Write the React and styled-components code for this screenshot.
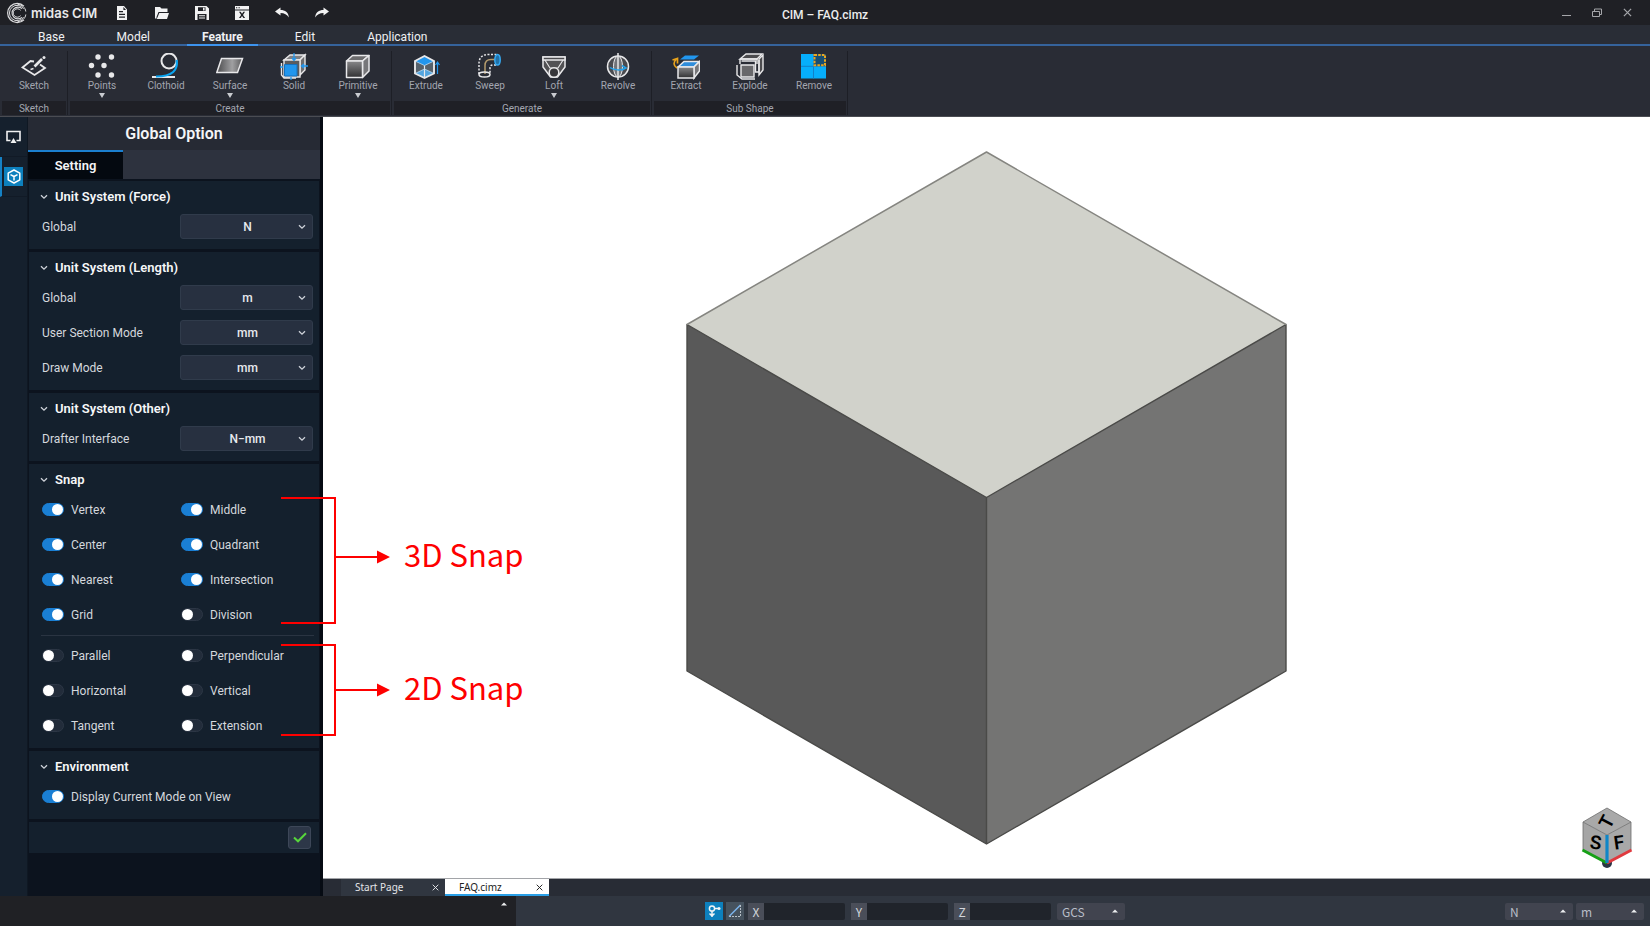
import React, { useState } from "react";
import styled, { createGlobalStyle, css } from "styled-components";

const ui = `Roboto, "Noto Sans CJK KR", sans-serif`;
const cjk = `"Noto Sans CJK KR", "Noto Sans", sans-serif`;

const GlobalStyle = createGlobalStyle`
  * { box-sizing: border-box; }
  html, body, #root { height: 100%; margin: 0; }
  body { background: #1f2025; color: #e6e8ec; font: 12px/16px ${ui}; }
  button, input, select { font: inherit; color: inherit; margin: 0; padding: 0; border: 0; border-radius: 0; background: none; }
  button { cursor: pointer; }
  svg { display: block; flex: none; }
`;

const Shell = styled.div`
  min-height: 100vh;
  display: flex;
  flex-direction: column;
`;

/* ---------- title bar ---------- */
const TitleBar = styled.header`
  height: 25px;
  display: grid;
  grid-template-columns: 1fr auto 1fr;
  align-items: center;
  background: #1f2025;
`;
const TitleLeft = styled.div`
  display: flex;
  align-items: center;
  padding-left: 6px;
`;
const Brand = styled.div`
  display: flex;
  align-items: center;
  gap: 4px;
  width: 96px;
  font: 600 13px/20px Inter, sans-serif;
  color: #e9e9ea;
  white-space: nowrap;
`;
const QuickButton = styled.button`
  width: 40px;
  height: 24px;
  display: grid;
  place-items: center;
`;
const DocTitle = styled.h1`
  margin: 0;
  padding-top: 4px;
  font: 500 12px/20px ${ui};
  color: #eceded;
`;
const WindowButtons = styled.div`
  display: flex;
  justify-content: flex-end;
  padding-right: 7px;
  color: #a5a6aa;
`;
const WindowButton = styled.button`
  width: 31px;
  height: 24px;
  display: grid;
  place-items: center;
`;

/* ---------- menu ---------- */
const Menu = styled.nav`
  height: 21px;
  display: flex;
  gap: 22px;
  padding-left: 23px;
  background: #292d36;
  border-bottom: 2px solid #35639c;
`;
const MenuItem = styled.a`
  height: 21px;
  padding: 2px 15px 0;
  text-decoration: none;
  color: #f0f1f3;
  font: ${(p) => (p.$active ? 700 : 400)} 12px/20px ${ui};
  border-bottom: 2px solid ${(p) => (p.$active ? "#3d94ef" : "transparent")};
`;

/* ---------- ribbon ---------- */
const Ribbon = styled.div`
  height: 71px;
  display: flex;
  padding: 5px 0 1px;
  background: #292c35;
  border-bottom: 1px solid #4a4c52;
`;
const Group = styled.section`
  display: flex;
  flex-direction: column;
  padding: 0 1px 0 2px;
  border-right: 1px solid #1d1f26;
`;
const Tools = styled.div`
  flex: 1;
  display: flex;
`;
const Tool = styled.button`
  width: 64px;
  display: flex;
  flex-direction: column;
  align-items: center;
  padding-top: 2px;
  color: #a3a6b0;
  font: 10px/11px ${ui};
`;
const Drop = styled.span`
  border: 3px solid transparent;
  border-top: 5px solid #c9cbd0;
  border-bottom: 0;
  margin-top: 2px;
`;
const GroupName = styled.h2`
  margin: 0;
  height: 14px;
  background: #1f2026;
  color: #a3a6b0;
  text-align: center;
  font: 10px/16px ${ui};
`;

/* ---------- workspace ---------- */
const Workspace = styled.div`
  flex: 1;
  display: flex;
`;
const Rail = styled.nav`
  width: 28px;
  background: #15202d;
  border-right: 1px solid #0f1823;
`;
const RailButton = styled.button`
  width: 27px;
  height: 40px;
  display: grid;
  place-items: center;
  padding-right: 2px;
  border-left: 2px solid ${(p) => (p.$active ? "#1581c4" : "transparent")};
  border-bottom: 1px solid #111a26;
`;
const RailTile = styled.span`
  width: 19px;
  height: 19px;
  display: grid;
  place-items: center;
  background: ${(p) => (p.$active ? "#0d80bd" : "none")};
`;
const Panel = styled.aside`
  width: 295px;
  background: #0c131e;
  border-right: 3px solid #060b13;
  position: relative;
  z-index: 1;
`;
const PanelTitle = styled.h2`
  margin: 0;
  height: 33px;
  background: #262a34;
  color: #f4f5f7;
  text-align: center;
  font: 600 16px/34px ${ui};
`;
const PanelTabs = styled.div`
  height: 29px;
  display: flex;
  background: #2d323e;
`;
const PanelTab = styled.button`
  width: 95px;
  background: #040910;
  border-top: 2px solid #1b7fcf;
  color: #f4f5f7;
  font: 600 13px/20px ${ui};
`;
const Sections = styled.div`
  display: flex;
  flex-direction: column;
  gap: 3px;
  padding: 2px 1px 0 1px;
`;
const Section = styled.section`
  padding-bottom: 5px;
  background: #14202d;
`;
const SectionTitle = styled.h3`
  margin: 0;
  height: 28px;
  display: flex;
  align-items: center;
  gap: 7px;
  padding: 3px 0 0 11px;
  color: #f6f7f9;
  font: 600 13px/20px ${ui};
`;
const Field = styled.label`
  height: 35px;
  display: flex;
  align-items: center;
  justify-content: space-between;
  padding: 0 6px 0 13px;
  color: #d5d8dd;
`;
const SelectBox = styled.span`
  position: relative;
  width: ${(p) => p.$width};
  height: ${(p) => p.$height};
  display: flex;
  align-items: center;
  svg {
    position: absolute;
    right: 7px;
    pointer-events: none;
  }
`;
const Picker = styled.select`
  appearance: none;
  width: 100%;
  height: 100%;
  ${(p) =>
    p.$status
      ? css`
          padding-left: 5px;
          border-radius: 2px;
          background: #41444f;
          color: #b9bec8;
          font: 12px/17px ${cjk};
        `
      : css`
          padding-left: 2px;
          text-align-last: center;
          border: 1px solid #303b4b;
          border-radius: 3px;
          background: #273040;
          color: #e8eaee;
          font-weight: 500;
        `}
`;
const SnapGrid = styled.div`
  position: relative;
  display: grid;
  grid-template-columns: 139px 1fr;
  grid-auto-rows: 35px;
  padding-left: 13px;
`;
const Rule = styled.hr`
  margin: 3px 5px 2px 12px;
  border: 0;
  height: 1px;
  background: #2a3442;
`;
const ToggleLabel = styled.label`
  height: 35px;
  display: flex;
  align-items: center;
  gap: 7px;
  color: #d5d8dd;
  white-space: nowrap;
`;
const Switch = styled.input`
  appearance: none;
  width: 22px;
  height: 13px;
  display: flex;
  align-items: center;
  border-radius: 7px;
  border: 1px solid #2c3645;
  background: #222c3a;
  &::before {
    content: "";
    width: 11px;
    height: 11px;
    border-radius: 50%;
    background: #fff;
  }
  &:checked {
    justify-content: flex-end;
    border-color: #1a7fd4;
    background: #1a7fd4;
  }
`;
const SoloRow = styled.div`
  padding-left: 13px;
`;
const PanelFooter = styled.div`
  height: 31px;
  display: flex;
  align-items: center;
  justify-content: flex-end;
  padding-right: 8px;
  background: #14202d;
`;
const Apply = styled.button`
  width: 23px;
  height: 23px;
  display: grid;
  place-items: center;
  border: 1px solid #3d4758;
  border-radius: 3px;
  background: #2d3748;
`;

/* ---------- red call-outs over the snap list ---------- */
const Callout = styled.div`
  position: absolute;
  left: 252px;
  top: ${(p) => p.$top}px;
  bottom: ${(p) => p.$bottom}px;
  display: flex;
  color: #fe0000;
  font: 31px/40px ${cjk};
  white-space: nowrap;
  pointer-events: none;
`;
const Bracket = styled.span`
  width: 55px;
  border: 2px solid #fe0000;
  border-left: 0;
`;
const Pointer = styled.span`
  height: ${(p) => p.$height}px;
  display: flex;
  align-items: center;
`;
const CalloutText = styled.span`
  padding: 0 0 6px 14px;
`;

/* ---------- viewport ---------- */
const Main = styled.main`
  flex: 1;
  display: flex;
  flex-direction: column;
`;
const Viewport = styled.div`
  flex: 1;
  position: relative;
  display: grid;
  place-items: center;
  background: #fff;
`;
const Navigator = styled.div`
  position: absolute;
  right: 17px;
  bottom: 8px;
`;
const DocTabs = styled.div`
  height: 18px;
  display: flex;
  padding-left: 18px;
  background: #282c35;
  border-top: 1px solid #a2a4a8;
`;
const DocTab = styled.div`
  width: 104px;
  display: flex;
  align-items: center;
  justify-content: space-between;
  padding: 0 4px 0 14px;
  background: ${(p) => (p.$active ? "#fff" : "#303640")};
  color: ${(p) => (p.$active ? "#222" : "#e4e5e8")};
  box-shadow: ${(p) => (p.$active ? "inset 0 -2px #2a9fe6" : "none")};
  font: 10px/15px "Noto Sans", sans-serif;
`;
const CloseTab = styled.button`
  width: 11px;
  height: 14px;
  display: grid;
  place-items: center;
`;

/* ---------- status bar ---------- */
const StatusBar = styled.footer`
  height: 30px;
  display: flex;
  background: #303640;
`;
const Log = styled.div`
  width: 516px;
  display: flex;
  justify-content: flex-end;
  padding: 6px 9px;
  background: #202125;
`;
const Coordinates = styled.form`
  display: flex;
  align-items: center;
  gap: 6px;
  padding-left: 189px;
`;
const ModeButtons = styled.div`
  display: flex;
  gap: 3px;
  margin-right: -2px;
`;
const ModeButton = styled.button`
  width: 18px;
  height: 18px;
  display: grid;
  place-items: center;
  background: ${(p) => (p.$active ? "#0d80bd" : "#46525e")};
`;
const Axis = styled.label`
  display: flex;
  color: #d3d6dc;
  font: 12px/17px ${cjk};
`;
const AxisName = styled.span`
  width: 16px;
  background: #4a4e59;
  text-align: center;
`;
const AxisInput = styled.input`
  width: 81px;
  height: 17px;
  background: #20242b;
  border-radius: 0 2px 2px 0;
`;
const Units = styled.div`
  margin-left: auto;
  display: flex;
  align-items: center;
  gap: 3px;
  padding-right: 6px;
`;

/* ---------- drawings ---------- */
const Chevron = () => (
  <svg width="8" height="6" viewBox="0 0 8 6" fill="none" stroke="#cfd3da" strokeWidth="1.3">
    <path d="M1 1.2 4 4.2 7 1.2" />
  </svg>
);
const UpMark = () => (
  <svg width="6" height="4" viewBox="0 0 6 4">
    <path d="M0 3.5 3 .5 6 3.5z" fill="#eceef0" />
  </svg>
);
const Cross = ({ size = 8 }) => (
  <svg width={size} height={size} viewBox="0 0 8 8" stroke="currentColor" strokeWidth="1.1">
    <path d="M.8.8 7.2 7.2M7.2.8.8 7.2" />
  </svg>
);
const Logo = () => (
  <svg width="21" height="22" viewBox="0 0 21 22" fill="none" stroke="#dcdcde">
    <path d="M18 4.200A9.600 9.600 0 1 0 18 17.800" strokeWidth="1.200" />
    <path d="M17.600 6.800A7.700 7.700 0 1 0 17.600 15.200" strokeWidth="1" />
    <path d="M16 6.700A5.900 5.900 0 1 0 16 15.300" strokeWidth="1.100" />
    <path d="M14.600 8.300A4.200 4.200 0 1 0 14.600 13.700" strokeWidth="1" />
    <path d="M11.500 2.300C16 2.600 19.300 5.500 19.800 9.500M11.500 19.700C16 19.400 19.300 16.500 19.800 12.500" strokeWidth="1" />
  </svg>
);

const quick = [
  ["New", <path key="a" fillRule="evenodd" d="M2 0h7l3 3.500V14H2zM4 5h4v1.200H4zM4 7.800h6V9H4zM4 10.500h6v1.200H4zM8.400 1v3h2.700z" />],
  ["Open", <path key="a" fillRule="evenodd" d="M0 1h5l1.500 1.500H12.500V6H3.500L1.500 11V2.500H1.500V12.500H0zM4.300 7H14l-2 6H1.800z" />],
  ["Save", <path key="a" fillRule="evenodd" d="M0 0h11.500L14 2.500V14H0zM3 1.200V5h7.500V1.200zM8 1.800h1.600v2.600H8zM2.500 8v6h9V8zM4 9.300h6v1H4zM4 11.500h6v1H4z" />],
  ["Close project", <path key="a" fillRule="evenodd" d="M0 0h14v14H0zM1 1.200v1h1.300v-1zM3.500 1.200v1h1.300v-1zM0 3.600h14v.9H0zM4 5.800l2.100 3.100L4 12h1.700L7 10l1.400 2h1.700L8 8.900l2-3.100H8.400L7 7.700 5.700 5.800z" />],
  ["Undo", <path key="a" d="M0 5.500 5.500 1.500v2.600c4.500 0 8 2.200 8.300 7.400C12 8.600 9.500 7 5.500 7v2.600z" />],
  ["Redo", <path key="a" d="M14 5.500 8.500 1.500v2.600C4 4.100.5 6.300.2 11.500 2 8.600 4.500 7 8.500 7v2.600z" />],
];

const W = "#e8e8ea";
const B = "#2196ee";
const Defs = () => (
  <defs>
    <linearGradient id="steel" x1="0" x2="1"><stop offset="0" stopColor="#4a4a4c" /><stop offset=".6" stopColor="#a0a0a2" /><stop offset="1" stopColor="#5c5c5e" /></linearGradient>
    <linearGradient id="dusk" x1="0" x2="0" y1="0" y2="1"><stop offset="0" stopColor="#88888a" /><stop offset="1" stopColor="#303032" /></linearGradient>
  </defs>
);
const icons = {
  Sketch: (
    <g fill="none" stroke={W} strokeWidth="1.800">
      <path d="M14 8.500 10.500 8 2.500 14.500 14.500 22 25 15 20 11.500" />
      <path d="M22 6 14.500 13.500" strokeWidth="2.600" /><path d="M13.500 15.500 10.500 16.500" strokeWidth="1.500" /><circle cx="24" cy="4.500" r="1.500" fill={W} stroke="none" />
    </g>
  ),
  Points: (
    <g fill={W}>
      {[[10, 4], [23.5, 4], [3.5, 12.5], [16, 12.5], [10, 22], [23.5, 22]].map(([x, y]) => <circle key={x + "," + y} cx={x} cy={y} r="2.700" />)}
    </g>
  ),
  Clothoid: (
    <g fill="none" strokeWidth="2">
      <circle cx="17" cy="8" r="7.500" stroke={W} />
      <path d="M0 24h23" stroke={W} />
      <path d="M24.700 7C26 17 21 23.500 4 23.500" stroke="#0aa5f2" strokeWidth="2.200" />
    </g>
  ),
  Surface: <path d="M5.500 5.500H26.500L21.500 19.500H.8z" fill="url(#steel)" stroke={W} strokeWidth="1.500" />,
  Solid: (
    <g>
      <g stroke={W} strokeWidth="1.400"><path d="M4 7 10 2h15l-5 5z" fill="#808083" /><path d="M20 7l5-5v15l-5 5z" fill="#6c6c6e" /><path d="M4 7h16v17H4z" fill="#5c5c5e" /><path d="M1.500 10v12l2.500 3h12" fill="none" /></g>
      <path d="M4.500 11.500h12.500v11.500H4.500z" fill={B} stroke="#1670bd" />
      <path d="M14 0v7M12 5l2 2.500L16 5M28 13h-6M24 11l-2.500 2 2.500 2M0 14h3M11 27v-3" stroke={B} fill="none" strokeWidth="1.300" />
    </g>
  ),
  Primitive: (
    <g stroke={W} strokeWidth="1.500" strokeLinejoin="round">
      <path d="M2.500 8 8.500 2.500H25L18.500 8z" fill="#6c6c6e" />
      <path d="M18.500 8 25 2.500V18l-6.500 6.500z" fill="#77777a" />
      <path d="M2.500 8h16v16.500h-16z" fill="url(#dusk)" />
    </g>
  ),
  Extrude: (
    <g>
      <path d="M3 8 12.500 3 22 8v12.500L12.500 25 3 20.500z" fill="#56616b" />
      <path d="M3 8 12.500 3 22 8 12.500 12.500z" fill={B} />
      <path d="M3 20.500 12.500 16 22 20.500 12.500 25z" fill="#54a5df" />
      <path d="M12.500 12.500V25" stroke={W} strokeWidth="1.200" /><path d="M3 8 12.500 12.500 22 8M3 20.500 12.500 16 22 20.500" stroke="#b9dcf5" strokeWidth=".8" fill="none" />
      <path d="M3 8 12.500 3 22 8v12.500L12.500 25 3 20.500z" fill="none" stroke={W} strokeWidth="1.900" />
      <path d="M25.500 21V9.500M23.500 12l2-3 2 3" stroke={B} strokeWidth="1.200" fill="none" />
    </g>
  ),
  Sweep: (
    <g fill="none" strokeWidth="1.500">
      <path d="M20.500 1.500H12C6 1.500 3 5 3 10.500V21M20 12h-3c-2 0-3 1-3 3v6" stroke={W} strokeDasharray="2 1.500" />
      <path d="M20 6.500h-5c-4 0-6 2-6 6V21" stroke="#b49b6c" />
      <ellipse cx="21.500" cy="6.800" rx="2.700" ry="5.300" fill="#2272a8" stroke="#35aaf3" />
      <ellipse cx="8.500" cy="21.500" rx="5.500" ry="2.500" stroke={W} />
    </g>
  ),
  Loft: (
    <g stroke={W} strokeWidth="1.500" fill="#515154">
      <path d="M3 4h22v10L17.500 24h-7L3 14z" /><path d="M4 5.500 10 15h8L24 5.500" fill="none" strokeWidth="1.100" />
      <path d="M3 4h22v3H3z" fill="#4a4a4d" /><circle cx="14" cy="19.500" r="4.800" fill="#37373b" />
    </g>
  ),
  Revolve: (
    <g fill="none" stroke={W} strokeWidth="1.500">
      <circle cx="14" cy="13.500" r="10.500" fill="#4a4b50" /><ellipse cx="14" cy="13.500" rx="4.500" ry="10.500" strokeWidth="1" fill="#717378" /><path d="M14 0v27" />
      <path d="M6 14.500c4 3 11 3 15 1M18 12.500l4 2.500-4 2" stroke="#22a0ea" />
    </g>
  ),
  Extract: (
    <g>
      <path d="M13 2.500h14L22 6.500H8z" fill={B} />
      <path d="M6 14 12 8.500h15.500L22 14z" fill="#2f8ddb" stroke={W} strokeWidth="1.500" /><path d="M22 14l5.500-5.500V18L22 25z" fill="#77777a" stroke={W} strokeWidth="1.500" /><path d="M6 14h16v11H6z" fill="url(#dusk)" stroke={W} strokeWidth="1.500" />
      <path d="M5 15C1 12.500 1.500 9 4 6.500M.5 7l5-1.500v5" stroke="#e8a31c" strokeWidth="1.700" fill="none" />
    </g>
  ),
  Explode: (
    <g stroke={W} strokeWidth="1.400" fill="#4b4b4e">
      <path d="M4 6 10 1h16l-5 5z" /><path d="M23 6l4-4v15l-4 5z" /><path d="M4 6h17v5M4 6v5M1 12v10l5 4h13" fill="none" /><path d="M5.500 8h14v11H23V7" fill="none" /><path d="M5 12h13v12H5z" fill="#68686b" />
    </g>
  ),
  Remove: (
    <g>
      <path d="M1 1h25v24.500H1z" fill="#06aefb" /><path d="M14 1h12v12H14z" fill="#174e73" /><path d="M13.500 1v24.500M1 13.300h25" stroke="#1280c8" /><path d="M14.500 2h10.500v10.300H14.500z" fill="none" stroke="#e9a51f" strokeWidth="2" strokeDasharray="2.500 1.200" />
    </g>
  ),
};

const Solid = () => (
  <svg width="602" height="696" viewBox="0 0 602 696" strokeLinejoin="round" role="img" aria-label="Solid cube">
    <path d="M300.500 2 600 174.500 300.500 347.500 1 174.500z" fill="#d1d2cb" />
    <path d="M1 174.500 300.500 347.500V694L1 521z" fill="#595959" />
    <path d="M300.500 347.500 600 174.500V521L300.500 694z" fill="#747473" />
    <path d="M1 521V174.500L300.500 347.500 600 174.500V521L300.500 694zM300.500 347.500V694" fill="none" stroke="#4a4a48" strokeWidth="1.400" />
    <path d="M1 174.500 300.500 2 600 174.500" fill="none" stroke="#858580" strokeWidth="1.500" />
  </svg>
);

const ViewCube = () => (
  <svg width="52" height="64" viewBox="0 0 52 64" role="img" aria-label="View direction">
    <circle cx="26" cy="57" r="5" fill="#2b3546" />
    <path d="M26 2 50 16 26 29 2 16z" fill="#a9a9a9" /><path d="M2 16 26 29V57L2 44z" fill="#a5a5a5" /><path d="M50 16 26 29V57L50 44z" fill="#a8a8a8" />
    <path d="M2 44V16L26 2 50 16V44M2 16 26 29 50 16" fill="none" stroke="#6d6d6d" strokeWidth=".8" />
    <path d="M1.500 44 26 57" stroke="#16a016" strokeWidth="3" /><path d="M50.500 44 26 57" stroke="#e03a3f" strokeWidth="3" />
    <path d="M26 29V57" stroke="#0f86c8" strokeWidth="3.200" />
    <g fontFamily="Roboto, sans-serif" fontSize="19" fontWeight="600" textAnchor="middle">
      <text transform="translate(14 43) rotate(6)">S</text>
      <text transform="translate(39 43) rotate(-8)">F</text>
      <text transform="translate(28 17) rotate(-62)" y="4">T</text>
    </g>
  </svg>
);

const groups = [
  ["Sketch", [["Sketch"]]],
  ["Create", [["Points", 1], ["Clothoid"], ["Surface", 1], ["Solid"], ["Primitive", 1]]],
  ["Generate", [["Extrude"], ["Sweep"], ["Loft", 1], ["Revolve"]]],
  ["Sub Shape", [["Extract"], ["Explode"], ["Remove"]]],
];
const unitSections = [
  ["Unit System (Force)", [["Global", "N"]]],
  ["Unit System (Length)", [["Global", "m"], ["User Section Mode", "mm"], ["Draw Mode", "mm"]]],
  ["Unit System (Other)", [["Drafter Interface", "N−mm"]]],
];
const snap3d = [["Vertex", true], ["Middle", true], ["Center", true], ["Quadrant", true], ["Nearest", true], ["Intersection", true], ["Grid", true], ["Division", false]];
const snap2d = ["Parallel", "Perpendicular", "Horizontal", "Vertical", "Tangent", "Extension"].map((n) => [n, false]);

function Toggle({ label, initial }) {
  const [on, setOn] = useState(initial);
  return (
    <ToggleLabel>
      <Switch type="checkbox" checked={on} onChange={() => setOn(!on)} />
      {label}
    </ToggleLabel>
  );
}
function SnapCallout({ top, bottom, pointer, children }) {
  return (
    <Callout $top={top} $bottom={bottom}>
      <Bracket />
      <Pointer $height={pointer}>
        <svg width="54" height="14" viewBox="0 0 54 14" fill="#fe0000">
          <path d="M0 6h41V.5L54 7 41 13.500V8H0z" />
        </svg>
        <CalloutText>{children}</CalloutText>
      </Pointer>
    </Callout>
  );
}
function StatusPicker({ label, value }) {
  return (
    <SelectBox $width="68px" $height="17px">
      <Picker $status aria-label={label}><option>{value}</option></Picker>
      <UpMark />
    </SelectBox>
  );
}

export default function App() {
  return (
    <Shell>
      <GlobalStyle />
      <TitleBar>
        <TitleLeft>
          <Brand><Logo />midas CIM</Brand>
          {quick.map(([name, shape]) => (
            <QuickButton key={name} aria-label={name} type="button">
              <svg width="14" height="14" viewBox="0 0 14 14" fill="#f2f2f3">{shape}</svg>
            </QuickButton>
          ))}
        </TitleLeft>
        <DocTitle>CIM – FAQ.cimz</DocTitle>
        <WindowButtons>
          <WindowButton aria-label="Minimize"><svg width="10" height="10" viewBox="0 0 10 10"><path d="M1 7h9v1H1z" fill="currentColor" /></svg></WindowButton>
          <WindowButton aria-label="Restore"><svg width="10" height="10" viewBox="0 0 10 10" fill="none" stroke="currentColor"><path d="M.5 3.500h7v5h-7zM2.500 3V1h7v5.500H8" /></svg></WindowButton>
          <WindowButton aria-label="Close"><Cross size={9} /></WindowButton>
        </WindowButtons>
      </TitleBar>
      <Menu>
        {["Base", "Model", "Feature", "Edit", "Application"].map((m) => (
          <MenuItem key={m} href={"#" + m.toLowerCase()} $active={m === "Feature"}>{m}</MenuItem>
        ))}
      </Menu>
      <Ribbon>
        <svg width="0" height="0"><Defs /></svg>
        {groups.map(([name, tools]) => (
          <Group key={name}>
            <Tools>
              {tools.map(([tool, drop]) => (
                <Tool key={tool} type="button">
                  <svg width="28" height="27" viewBox="0 0 28 27">{icons[tool]}</svg>
                  {tool}
                  {drop && <Drop />}
                </Tool>
              ))}
            </Tools>
            <GroupName>{name}</GroupName>
          </Group>
        ))}
      </Ribbon>
      <Workspace>
        <Rail>
          <RailButton aria-label="Display">
            <RailTile>
              <svg width="15" height="14" viewBox="0 0 15 14" fill="none" stroke="#f0f1f2" strokeWidth="1.600"><path d="M4.500 10.500H1V1.500h13v9h-3.500" /><path d="M7.500 8 10.500 13h-6z" fill="#f0f1f2" stroke="none" /></svg>
            </RailTile>
          </RailButton>
          <RailButton aria-label="Model" $active>
            <RailTile $active>
              <svg width="14" height="15" viewBox="0 0 14 15" fill="none" stroke="#fff" strokeWidth="1.500" strokeLinejoin="round"><path d="M7 1 12.800 4.200v6.600L7 14 1.200 10.800V4.200zM3.500 5.700 7 7.500l3.500-1.800M7 7.500v4" /></svg>
            </RailTile>
          </RailButton>
        </Rail>
        <Panel>
          <PanelTitle>Global Option</PanelTitle>
          <PanelTabs><PanelTab type="button">Setting</PanelTab></PanelTabs>
          <Sections>
            {unitSections.map(([title, fields]) => (
              <Section key={title}>
                <SectionTitle><Chevron />{title}</SectionTitle>
                {fields.map(([label, value]) => (
                  <Field key={label}>
                    {label}
                    <SelectBox $width="133px" $height="25px">
                      <Picker><option>{value}</option></Picker>
                      <Chevron />
                    </SelectBox>
                  </Field>
                ))}
              </Section>
            ))}
            <Section>
              <SectionTitle><Chevron />Snap</SectionTitle>
              <SnapGrid>
                {snap3d.map(([n, on]) => <Toggle key={n} label={n} initial={on} />)}
                <SnapCallout top={5} bottom={8} pointer={120}>3D Snap</SnapCallout>
              </SnapGrid>
              <Rule />
              <SnapGrid>
                {snap2d.map(([n, on]) => <Toggle key={n} label={n} initial={on} />)}
                <SnapCallout top={6} bottom={7} pointer={92}>2D Snap</SnapCallout>
              </SnapGrid>
            </Section>
            <Section>
              <SectionTitle><Chevron />Environment</SectionTitle>
              <SoloRow><Toggle label="Display Current Mode on View" initial={true} /></SoloRow>
            </Section>
            <PanelFooter>
              <Apply aria-label="Apply">
                <svg width="14" height="11" viewBox="0 0 14 11" fill="none" stroke="#57d63c" strokeWidth="2"><path d="M1 5.500 5 9.300 13 1.300" /></svg>
              </Apply>
            </PanelFooter>
          </Sections>
        </Panel>
        <Main>
          <Viewport>
            <Solid />
            <Navigator><ViewCube /></Navigator>
          </Viewport>
          <DocTabs>
            <DocTab>Start Page<CloseTab aria-label="Close Start Page"><Cross size={7} /></CloseTab></DocTab>
            <DocTab $active>FAQ.cimz<CloseTab aria-label="Close FAQ.cimz"><Cross size={7} /></CloseTab></DocTab>
          </DocTabs>
        </Main>
      </Workspace>
      <StatusBar>
        <Log><UpMark /></Log>
        <Coordinates>
          <ModeButtons>
            <ModeButton type="button" $active aria-label="Snap to node">
              <svg width="14" height="14" viewBox="0 0 14 14" fill="none" stroke="#f3f5f6" strokeWidth="1.500"><circle cx="5" cy="4.500" r="2.600" /><path d="M5 7v6M2.500 9.500 5 12l2.500-2.500M7.500 4.500h4" /><circle cx="12" cy="4.500" r="1.500" fill="#f3f5f6" stroke="none" /></svg>
            </ModeButton>
            <ModeButton type="button" aria-label="Angle guide">
              <svg width="14" height="14" viewBox="0 0 14 14" fill="none"><path d="M1 12.500 12.500 1" stroke="#7db4ee" strokeWidth="1.400" /><path d="M12.500 1v11.500H1" stroke="#b8c0c8" strokeDasharray="2 1" /></svg>
            </ModeButton>
          </ModeButtons>
          {["X", "Y", "Z"].map((a) => (
            <Axis key={a}><AxisName>{a}</AxisName><AxisInput type="text" /></Axis>
          ))}
          <StatusPicker label="Coordinate system" value="GCS" />
        </Coordinates>
        <Units>
          <StatusPicker label="Force unit" value="N" />
          <StatusPicker label="Length unit" value="m" />
        </Units>
      </StatusBar>
    </Shell>
  );
}
